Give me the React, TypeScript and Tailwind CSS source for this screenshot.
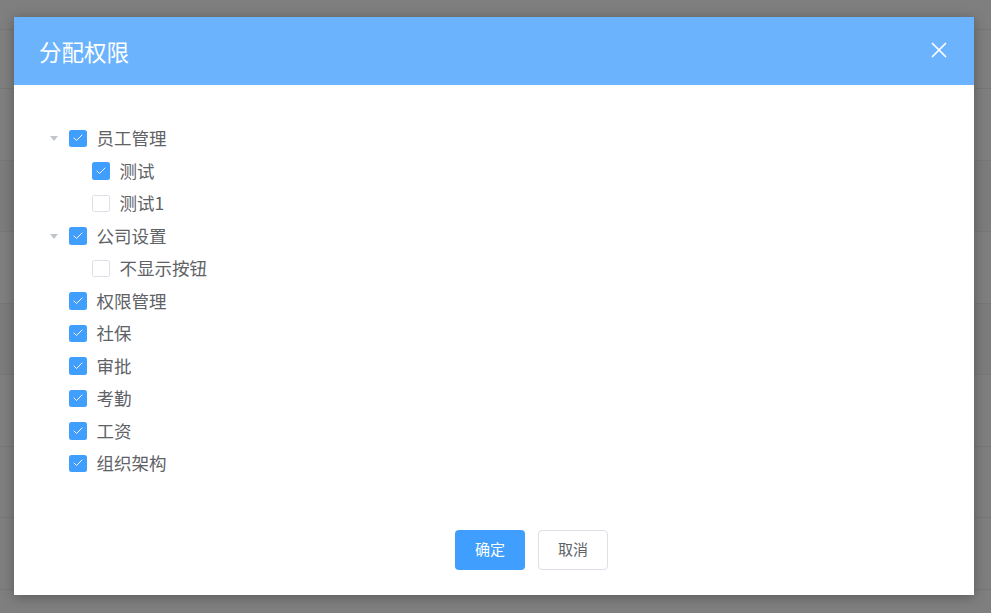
import { Check, X } from "lucide-react"

interface TreeItem {
  label: string
  checked: boolean
  level: number
  expandable?: boolean
}

const treeItems: TreeItem[] = [
  { label: "员工管理", checked: true, level: 0, expandable: true },
  { label: "测试", checked: true, level: 1 },
  { label: "测试1", checked: false, level: 1 },
  { label: "公司设置", checked: true, level: 0, expandable: true },
  { label: "不显示按钮", checked: false, level: 1 },
  { label: "权限管理", checked: true, level: 0 },
  { label: "社保", checked: true, level: 0 },
  { label: "审批", checked: true, level: 0 },
  { label: "考勤", checked: true, level: 0 },
  { label: "工资", checked: true, level: 0 },
  { label: "组织架构", checked: true, level: 0 },
]

// rows of the page table lying under the mask
const bgRows = [false, true, false, true, false, false, false]

function TreeCheckbox({ checked }: { checked: boolean }) {
  return checked ? (
    <span className="flex size-[17.5px] shrink-0 items-center justify-center rounded-[2.5px] bg-[#409eff]">
      <Check className="size-[12px] text-white" strokeWidth={2} />
    </span>
  ) : (
    <span className="size-[17.5px] shrink-0 rounded-[2.5px] border border-[#dcdfe6] bg-white" />
  )
}

function TreeRow({ item }: { item: TreeItem }) {
  return (
    <div
      className={`flex h-[32.5px] items-center ${item.level === 1 ? "pl-[23px]" : ""}`}
    >
      <span className="flex w-[30px] shrink-0 items-center justify-center">
        {item.expandable && (
          <span className="mt-[1px] h-0 w-0 border-x-[4.5px] border-t-[5.5px] border-x-transparent border-t-[#c0c4cc]" />
        )}
      </span>
      <TreeCheckbox checked={item.checked} />
      <span className="mb-[1px] ml-[10px] text-[17.5px] leading-none text-[#606266]">{item.label}</span>
    </div>
  )
}

export default function App() {
  return (
    <div
      className="relative h-[613px] w-[991px] overflow-hidden bg-white"
      style={{ fontFamily: '"Noto Sans CJK SC", "Noto Sans", sans-serif' }}
    >
      {/* page underneath */}
      <div className="flex flex-col">
        <div className="h-[30px] border-b border-[#ebeef5]" />
        <div className="h-[59px] border-b border-[#ebeef5]" />
        {bgRows.map((striped, i) => (
          <div
            key={i}
            className={`grid h-[71.5px] grid-cols-[273px_566px_1fr] border-b border-[#ebeef5] ${
              striped ? "bg-[#f8f8f8]" : ""
            }`}
          >
            <div className="border-r border-[#ebeef5]" />
            <div className="border-r border-[#ebeef5]" />
            <div />
          </div>
        ))}
      </div>

      {/* mask + dialog */}
      <div className="absolute inset-0 bg-black/50">
        <div className="ml-[14px] mt-[17px] w-[960px] bg-white shadow-[0_2px_12px_rgba(0,0,0,0.3)]">
          <div className="flex h-[68px] items-center justify-between bg-[#6bb3fd] pl-[25px] pr-[22px]">
            <span className="pt-[1px] text-[22.5px] leading-none text-white">分配权限</span>
            <X className="mb-[3px] size-[26px] text-white" strokeWidth={1.6} />
          </div>
          <div className="px-[25px] pb-[37.5px] pt-[37px]">
            {treeItems.map((item) => (
              <TreeRow key={item.label} item={item} />
            ))}
          </div>
          <div className="flex gap-[13px] pb-[25px] pl-[441px] pt-[12.5px]">
            <button className="h-[40px] w-[70px] rounded-[4px] bg-[#409eff] text-[15px] text-white">
              确定
            </button>
            <button className="h-[40px] w-[70px] rounded-[4px] border border-[#dcdfe6] bg-white text-[15px] text-[#606266]">
              取消
            </button>
          </div>
        </div>
      </div>
    </div>
  )
}
